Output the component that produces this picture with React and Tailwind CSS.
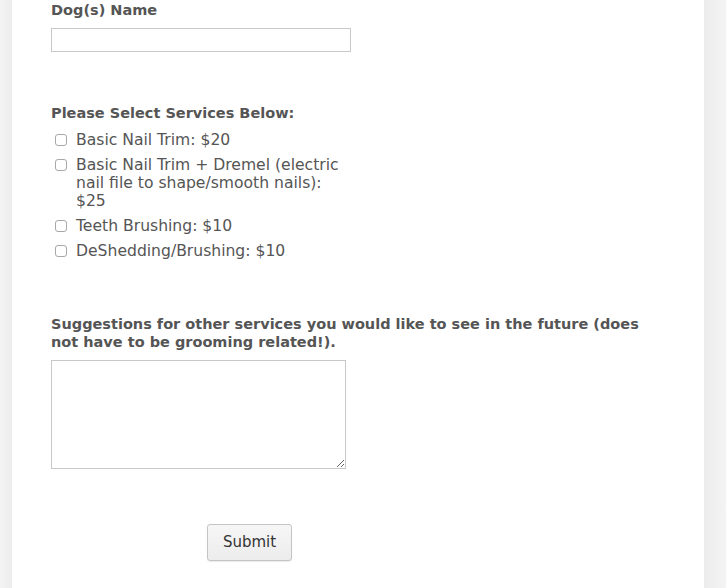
import React from 'react'

const services = [
  'Basic Nail Trim: $20',
  'Basic Nail Trim + Dremel (electric nail file to shape/smooth nails): $25',
  'Teeth Brushing: $10',
  'DeShedding/Brushing: $10',
]

const font = { fontFamily: '"DejaVu Sans", Verdana, sans-serif' }

export default function App() {
  return (
    <div className="flex h-[588px] w-[726px] overflow-hidden bg-[#f3f3f3]" style={font}>
      {/* left gutter */}
      <div className="w-[12px] flex-shrink-0 bg-gradient-to-r from-[#f4f4f4] to-[#ececec]" />

      {/* form panel */}
      <div className="w-[692px] flex-shrink-0 bg-white pl-[39px] pt-[1px]">
        <div className="text-[14.5px] leading-[18px] font-bold text-[#555]">Dog(s) Name</div>
        <input
          type="text"
          className="mt-[9px] block h-[24px] w-[300px] border border-[#c8c8c8] bg-white outline-none"
        />

        <div className="mt-[52px] text-[14.5px] leading-[18px] font-bold text-[#555]">
          Please Select Services Below:
        </div>
        <div className="mt-[9px] flex w-[300px] flex-col gap-[7px]">
          {services.map(s => (
            <label key={s} className="flex items-start gap-[9px] pl-[4px]">
              <span className="mt-[3px] h-[12px] w-[12px] flex-shrink-0 rounded-[3px] border border-[#a8a8a8] bg-white" />
              <span className="w-[270px] text-[15.6px] leading-[18px] text-[#555]">{s}</span>
            </label>
          ))}
        </div>

        <div className="mt-[55px] w-[605px] text-[14.5px] leading-[18px] font-bold text-[#555]">
          Suggestions for other services you would like to see in the future (does not have to be grooming related!).
        </div>
        <textarea className="mt-[9px] block h-[109px] w-[295px] resize border border-[#c8c8c8] bg-white outline-none" />

        <button className="ml-[156px] mt-[55px] h-[37px] w-[85px] rounded-[3px] border border-[#c4c4c4] bg-gradient-to-b from-[#f6f6f6] to-[#ececec] text-[15px] text-[#333] shadow-[0_1px_1px_rgba(0,0,0,0.08)]">
          Submit
        </button>
      </div>

      {/* right gutter */}
      <div className="flex-1 bg-gradient-to-r from-[#ececec] to-[#f4f4f4]" />
    </div>
  )
}
